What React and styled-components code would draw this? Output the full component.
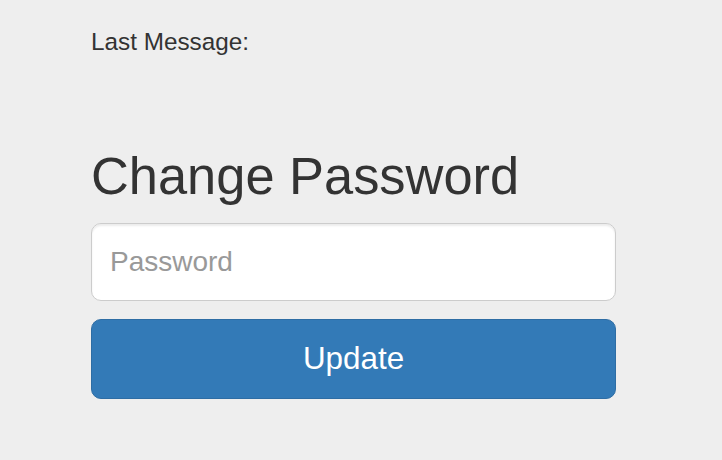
import React from "react";
import styled, { createGlobalStyle } from "styled-components";

const Global = createGlobalStyle`
  html, body { margin: 0; padding: 0; background: #eeeeee; }
  body {
    font-family: "Liberation Sans", Arial, Helvetica, sans-serif;
    color: #333333;
    font-size: 24px;
    line-height: 1.42857;
  }
  * { box-sizing: border-box; }
`;

const Page = styled.div`
  width: 722px;
  min-height: 460px;
  padding: 25px 0 0 91px;
`;

const Content = styled.div`
  width: 525px;
  display: flex;
  flex-direction: column;
`;

const Status = styled.div`
  font-size: 24.3px;
  line-height: 34px;
`;

const Heading = styled.h2`
  margin: 89px 0 18px;
  font-size: 52.4px;
  font-weight: 500;
  line-height: 56.5px;
  color: #333333;
`;

const Form = styled.form`
  display: flex;
  flex-direction: column;
  gap: 18px;
`;

const Input = styled.input`
  height: 78px;
  width: 100%;
  padding: 0 18px;
  font-family: inherit;
  font-size: 28px;
  color: #555555;
  background: #ffffff;
  border: 1px solid #cccccc;
  border-radius: 10px;
  box-shadow: inset 0 2px 2px rgba(0, 0, 0, 0.075);
  outline: none;
  &::placeholder { color: #999999; }
`;

const Button = styled.button`
  height: 80px;
  width: 100%;
  font-family: inherit;
  font-size: 31.4px;
  color: #ffffff;
  background: #337ab7;
  border: 1px solid #2e6da4;
  border-radius: 10px;
  cursor: pointer;
  padding: 0;
`;

export default function App() {
  return (
    <>
      <Global />
      <Page>
        <Content>
          <Status>Last Message:</Status>
          <Heading>Change Password</Heading>
          <Form onSubmit={(e) => e.preventDefault()}>
            <Input type="password" placeholder="Password" />
            <Button type="submit">Update</Button>
          </Form>
        </Content>
      </Page>
    </>
  );
}
